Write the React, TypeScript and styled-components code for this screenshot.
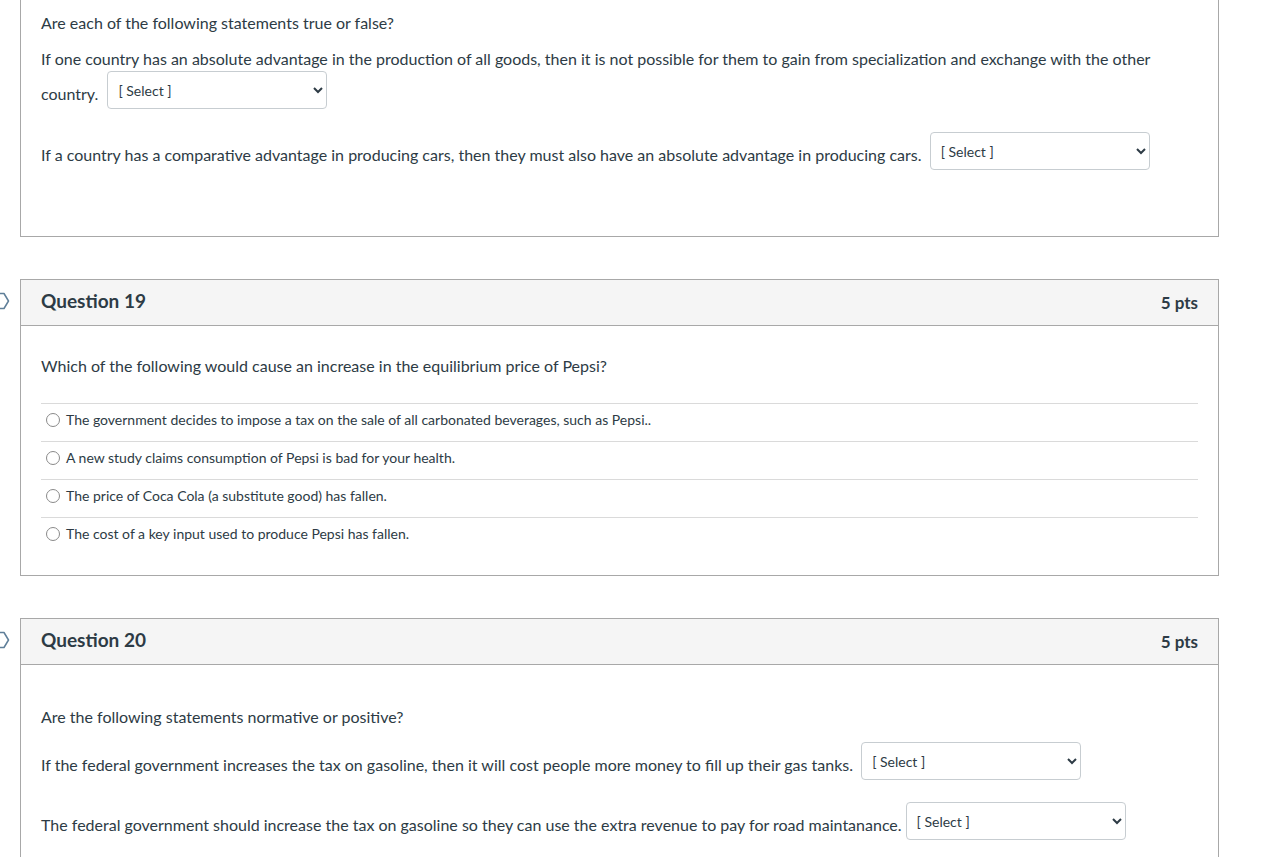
import React from "react";
import styled, { createGlobalStyle } from "styled-components";

const GlobalStyle = createGlobalStyle`
  html, body {
    margin: 0;
    padding: 0;
    background: #fff;
  }
  body {
    font-family: Lato, "Open Sans", "Liberation Sans", sans-serif;
    color: #2d3b45;
    font-size: 16px;
    line-height: 1.5;
  }
`;

const Page = styled.div`
  padding: 0 0 40px 20px;
  width: 1199px;
`;

const Panel = styled.div<{ $cut?: boolean }>`
  position: relative;
  border: 1px solid #a8a8a8;
  border-top: ${(p) => (p.$cut ? "none" : "1px solid #a8a8a8")};
  margin-bottom: 42px;
`;

const Flag = styled.svg`
  position: absolute;
  left: -33px;
  top: 12px;
  width: 22px;
  height: 18px;
`;

const Header = styled.div`
  display: flex;
  align-items: center;
  justify-content: space-between;
  height: 45px;
  padding: 0 20px;
  background: #f5f5f5;
  border-bottom: 1px solid #a8a8a8;
`;

const Title = styled.h2`
  margin: -5px 0 0;
  font-size: 19px;
  font-weight: 700;
  line-height: 1;
`;

const Points = styled.div`
  font-size: 17px;
  font-weight: 700;
  line-height: 1;
`;

const Body = styled.div<{ $top: number; $bottom: number }>`
  padding: ${(p) => p.$top}px 20px ${(p) => p.$bottom}px;
`;

const Text = styled.p<{ $mb?: number }>`
  margin: 0 0 ${(p) => p.$mb ?? 11}px;
  line-height: 25px;
`;

const Select = styled.select<{ $gap?: number }>`
  width: 220px;
  height: 38px;
  margin-left: ${(p) => p.$gap ?? 4}px;
  margin-bottom: 12px;
  padding: 0 6px;
  vertical-align: middle;
  font-family: Lato, "Open Sans", "Liberation Sans", sans-serif;
  font-size: 14px;
  color: #2d3b45;
  background: #fff;
  border: 1px solid #c7cdd1;
  border-radius: 4px;
`;

const Answers = styled.div`
  margin-top: 25px;
`;

const Answer = styled.label`
  display: flex;
  align-items: center;
  height: 31px;
  padding: 0 0 6px 5px;
  border-top: 1px solid #dadada;
  font-size: 14px;
  gap: 6px;
`;

const Radio = styled.span`
  width: 12px;
  height: 12px;
  border: 1px solid #8a8a8a;
  border-radius: 50%;
  flex: none;
`;

const Pick = ({ gap }: { gap?: number }) => (
  <Select defaultValue="" $gap={gap}>
    <option value="">[ Select ]</option>
    <option value="a">True</option>
    <option value="b">False</option>
  </Select>
);

const FlagIcon = () => (
  <Flag viewBox="0 0 22 18">
    <path d="M1 1.5 H16 L20.5 9 L16 16.5 H1 Z" fill="none" stroke="#5f7f99" strokeWidth="1.5" strokeLinejoin="round" />
  </Flag>
);

const answers19 = [
  "The government decides to impose a tax on the sale of all carbonated beverages, such as Pepsi..",
  "A new study claims consumption of Pepsi is bad for your health.",
  "The price of Coca Cola (a substitute good) has fallen.",
  "The cost of a key input used to produce Pepsi has fallen.",
];

export default function App() {
  return (
    <>
      <GlobalStyle />
      <Page>
        <Panel $cut>
          <Body $top={10} $bottom={54}>
            <Text>Are each of the following statements true or false?</Text>
            <Text>
              If one country has an absolute advantage in the production of all goods, then it is not possible for them
              to gain from specialization and exchange with the other country. <Pick gap={5} />
            </Text>
            <Text $mb={0}>
              If a country has a comparative advantage in producing cars, then they must also have an absolute advantage
              in producing cars. <Pick />
            </Text>
          </Body>
        </Panel>

        <Panel>
          <FlagIcon />
          <Header>
            <Title>Question 19</Title>
            <Points>5 pts</Points>
          </Header>
          <Body $top={27} $bottom={20}>
            <Text $mb={0}>Which of the following would cause an increase in the equilibrium price of Pepsi?</Text>
            <Answers>
              {answers19.map((a) => (
                <Answer key={a}>
                  <Radio />
                  {a}
                </Answer>
              ))}
            </Answers>
          </Body>
        </Panel>

        <Panel>
          <FlagIcon />
          <Header>
            <Title>Question 20</Title>
            <Points>5 pts</Points>
          </Header>
          <Body $top={39} $bottom={30}>
            <Text $mb={13}>Are the following statements normative or positive?</Text>
            <Text $mb={10}>
              If the federal government increases the tax on gasoline, then it will cost people more money to fill up
              their gas tanks. <Pick />
            </Text>
            <Text $mb={0}>
              The federal government should increase the tax on gasoline so they can use the extra revenue to pay for
              road maintanance.<Pick gap={4} />
            </Text>
          </Body>
        </Panel>
      </Page>
    </>
  );
}
